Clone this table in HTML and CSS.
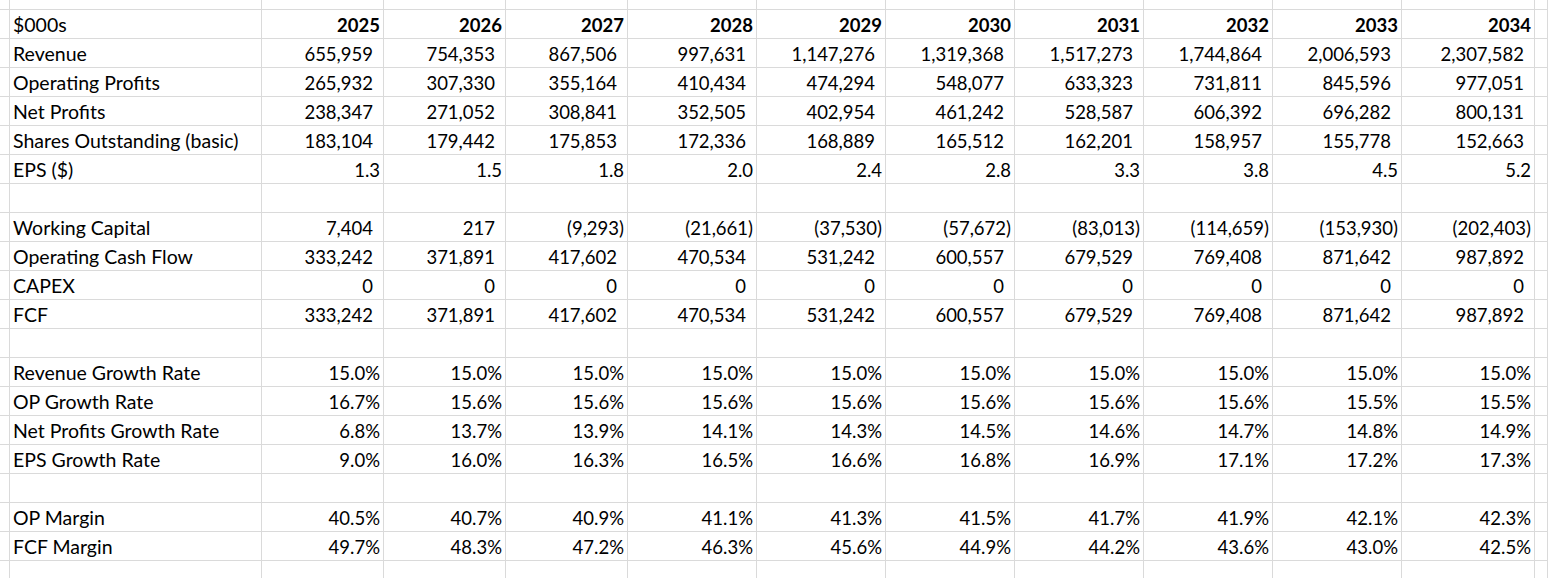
FILE: index.html
```html
<!DOCTYPE html>
<html>
<head>
<meta charset="utf-8">
<link rel="stylesheet" href="styles.css">
</head>
<body>
<div class="sheet">
  <div class="row top"><div class="c"></div><div class="c"></div><div class="c"></div><div class="c"></div><div class="c"></div><div class="c"></div><div class="c"></div><div class="c"></div><div class="c"></div><div class="c"></div><div class="c"></div><div class="c"></div><div class="c"></div></div>
  <div class="row"><div class="c"></div><div class="c l">$000s</div><div class="c p b">2025</div><div class="c p b">2026</div><div class="c p b">2027</div><div class="c p b">2028</div><div class="c p b">2029</div><div class="c p b">2030</div><div class="c p b">2031</div><div class="c p b">2032</div><div class="c p b">2033</div><div class="c p b">2034</div><div class="c"></div></div>
  <div class="row"><div class="c"></div><div class="c l">Revenue</div><div class="c n">655,959</div><div class="c n">754,353</div><div class="c n">867,506</div><div class="c n">997,631</div><div class="c n">1,147,276</div><div class="c n">1,319,368</div><div class="c n">1,517,273</div><div class="c n">1,744,864</div><div class="c n">2,006,593</div><div class="c n">2,307,582</div><div class="c"></div></div>
  <div class="row"><div class="c"></div><div class="c l">Operating Profits</div><div class="c n">265,932</div><div class="c n">307,330</div><div class="c n">355,164</div><div class="c n">410,434</div><div class="c n">474,294</div><div class="c n">548,077</div><div class="c n">633,323</div><div class="c n">731,811</div><div class="c n">845,596</div><div class="c n">977,051</div><div class="c"></div></div>
  <div class="row"><div class="c"></div><div class="c l">Net Profits</div><div class="c n">238,347</div><div class="c n">271,052</div><div class="c n">308,841</div><div class="c n">352,505</div><div class="c n">402,954</div><div class="c n">461,242</div><div class="c n">528,587</div><div class="c n">606,392</div><div class="c n">696,282</div><div class="c n">800,131</div><div class="c"></div></div>
  <div class="row"><div class="c"></div><div class="c l">Shares Outstanding (basic)</div><div class="c n">183,104</div><div class="c n">179,442</div><div class="c n">175,853</div><div class="c n">172,336</div><div class="c n">168,889</div><div class="c n">165,512</div><div class="c n">162,201</div><div class="c n">158,957</div><div class="c n">155,778</div><div class="c n">152,663</div><div class="c"></div></div>
  <div class="row"><div class="c"></div><div class="c l">EPS ($)</div><div class="c p">1.3</div><div class="c p">1.5</div><div class="c p">1.8</div><div class="c p">2.0</div><div class="c p">2.4</div><div class="c p">2.8</div><div class="c p">3.3</div><div class="c p">3.8</div><div class="c p">4.5</div><div class="c p">5.2</div><div class="c"></div></div>
  <div class="row"><div class="c"></div><div class="c"></div><div class="c"></div><div class="c"></div><div class="c"></div><div class="c"></div><div class="c"></div><div class="c"></div><div class="c"></div><div class="c"></div><div class="c"></div><div class="c"></div><div class="c"></div></div>
  <div class="row"><div class="c"></div><div class="c l">Working Capital</div><div class="c n">7,404</div><div class="c n">217</div><div class="c p">(9,293)</div><div class="c p">(21,661)</div><div class="c p">(37,530)</div><div class="c p">(57,672)</div><div class="c p">(83,013)</div><div class="c p">(114,659)</div><div class="c p">(153,930)</div><div class="c p">(202,403)</div><div class="c"></div></div>
  <div class="row"><div class="c"></div><div class="c l">Operating Cash Flow</div><div class="c n">333,242</div><div class="c n">371,891</div><div class="c n">417,602</div><div class="c n">470,534</div><div class="c n">531,242</div><div class="c n">600,557</div><div class="c n">679,529</div><div class="c n">769,408</div><div class="c n">871,642</div><div class="c n">987,892</div><div class="c"></div></div>
  <div class="row"><div class="c"></div><div class="c l">CAPEX</div><div class="c n">0</div><div class="c n">0</div><div class="c n">0</div><div class="c n">0</div><div class="c n">0</div><div class="c n">0</div><div class="c n">0</div><div class="c n">0</div><div class="c n">0</div><div class="c n">0</div><div class="c"></div></div>
  <div class="row"><div class="c"></div><div class="c l">FCF</div><div class="c n">333,242</div><div class="c n">371,891</div><div class="c n">417,602</div><div class="c n">470,534</div><div class="c n">531,242</div><div class="c n">600,557</div><div class="c n">679,529</div><div class="c n">769,408</div><div class="c n">871,642</div><div class="c n">987,892</div><div class="c"></div></div>
  <div class="row"><div class="c"></div><div class="c"></div><div class="c"></div><div class="c"></div><div class="c"></div><div class="c"></div><div class="c"></div><div class="c"></div><div class="c"></div><div class="c"></div><div class="c"></div><div class="c"></div><div class="c"></div></div>
  <div class="row"><div class="c"></div><div class="c l">Revenue Growth Rate</div><div class="c p">15.0%</div><div class="c p">15.0%</div><div class="c p">15.0%</div><div class="c p">15.0%</div><div class="c p">15.0%</div><div class="c p">15.0%</div><div class="c p">15.0%</div><div class="c p">15.0%</div><div class="c p">15.0%</div><div class="c p">15.0%</div><div class="c"></div></div>
  <div class="row"><div class="c"></div><div class="c l">OP Growth Rate</div><div class="c p">16.7%</div><div class="c p">15.6%</div><div class="c p">15.6%</div><div class="c p">15.6%</div><div class="c p">15.6%</div><div class="c p">15.6%</div><div class="c p">15.6%</div><div class="c p">15.6%</div><div class="c p">15.5%</div><div class="c p">15.5%</div><div class="c"></div></div>
  <div class="row"><div class="c"></div><div class="c l">Net Profits Growth Rate</div><div class="c p">6.8%</div><div class="c p">13.7%</div><div class="c p">13.9%</div><div class="c p">14.1%</div><div class="c p">14.3%</div><div class="c p">14.5%</div><div class="c p">14.6%</div><div class="c p">14.7%</div><div class="c p">14.8%</div><div class="c p">14.9%</div><div class="c"></div></div>
  <div class="row"><div class="c"></div><div class="c l">EPS Growth Rate</div><div class="c p">9.0%</div><div class="c p">16.0%</div><div class="c p">16.3%</div><div class="c p">16.5%</div><div class="c p">16.6%</div><div class="c p">16.8%</div><div class="c p">16.9%</div><div class="c p">17.1%</div><div class="c p">17.2%</div><div class="c p">17.3%</div><div class="c"></div></div>
  <div class="row"><div class="c"></div><div class="c"></div><div class="c"></div><div class="c"></div><div class="c"></div><div class="c"></div><div class="c"></div><div class="c"></div><div class="c"></div><div class="c"></div><div class="c"></div><div class="c"></div><div class="c"></div></div>
  <div class="row"><div class="c"></div><div class="c l">OP Margin</div><div class="c p">40.5%</div><div class="c p">40.7%</div><div class="c p">40.9%</div><div class="c p">41.1%</div><div class="c p">41.3%</div><div class="c p">41.5%</div><div class="c p">41.7%</div><div class="c p">41.9%</div><div class="c p">42.1%</div><div class="c p">42.3%</div><div class="c"></div></div>
  <div class="row"><div class="c"></div><div class="c l">FCF Margin</div><div class="c p">49.7%</div><div class="c p">48.3%</div><div class="c p">47.2%</div><div class="c p">46.3%</div><div class="c p">45.6%</div><div class="c p">44.9%</div><div class="c p">44.2%</div><div class="c p">43.6%</div><div class="c p">43.0%</div><div class="c p">42.5%</div><div class="c"></div></div>
  <div class="row"><div class="c"></div><div class="c"></div><div class="c"></div><div class="c"></div><div class="c"></div><div class="c"></div><div class="c"></div><div class="c"></div><div class="c"></div><div class="c"></div><div class="c"></div><div class="c"></div><div class="c"></div></div>
</div>
</body>
</html>
```
FILE: styles.css
```css
html, body {
  margin: 0;
  padding: 0;
  background: #ffffff;
}
body {
  width: 1548px;
  height: 578px;
  overflow: hidden;
  font-family: "Lato", "Liberation Sans", sans-serif;
  font-size: 18.5px;
  color: #000000;
}
.sheet {
  display: flex;
  flex-direction: column;
}
.row {
  display: grid;
  grid-template-columns: 10px 252px 122px 122px 122px 129px 129px 129px 129px 129px 129px 133px 1fr;
  height: 29px;
}
.row.top {
  height: 10px;
}
.c {
  box-sizing: border-box;
  border-right: 1px solid #dadada;
  border-bottom: 1px solid #dadada;
  display: flex;
  align-items: flex-end;
  line-height: 22px;
  padding-bottom: 2px;
  white-space: nowrap;
  overflow: hidden;
}
.l {
  padding-left: 3px;
  font-size: 19.5px;
}
.p {
  justify-content: flex-end;
  padding-right: 3px;
}
.n {
  justify-content: flex-end;
  padding-right: 10px;
}
.b {
  font-weight: bold;
}
```
